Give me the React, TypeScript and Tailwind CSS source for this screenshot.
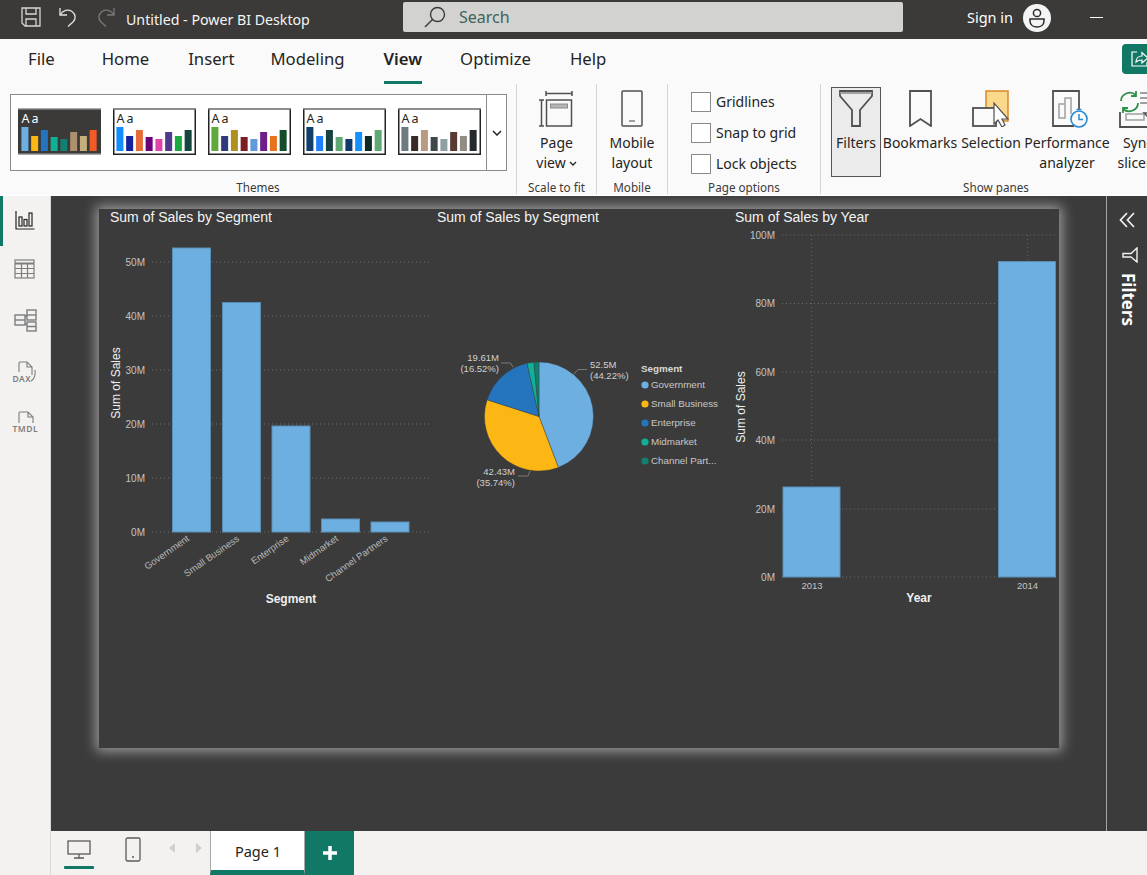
import React from "react";

const GREEN = "#117865";

const themes = [
  { bg: "#3b3a39", text: "#ffffff", frame: "#9a9a9a", bars: ["#6caee0", "#fdb714", "#2475be", "#10b096", "#128070", "#ad916e", "#c4ae7c", "#f25b26"] },
  { bg: "#ffffff", text: "#252423", frame: "#222222", bars: ["#118dff", "#12239e", "#e66c37", "#6b007b", "#e044a7", "#4f3a8c", "#1aab40", "#15463f"] },
  { bg: "#ffffff", text: "#252423", frame: "#222222", bars: ["#5fa83c", "#2d3a7c", "#b0901e", "#7c1d24", "#5f9bd8", "#6b1e8c", "#e8711c", "#144d2b"] },
  { bg: "#ffffff", text: "#252423", frame: "#222222", bars: ["#11406f", "#1c80ff", "#17423f", "#5fa974", "#0f3a6e", "#1391ff", "#0c2a25", "#5fa974"] },
  { bg: "#ffffff", text: "#252423", frame: "#222222", bars: ["#6d7b80", "#3b2a28", "#b89a82", "#40484a", "#8ea0a4", "#5a3a34", "#918c84", "#252a2c"] },
];
const barHeights = [24, 15, 21, 14, 12, 19, 15, 21];

function ThemeThumb({ theme, dark }: { theme: (typeof themes)[number]; dark?: boolean }) {
  return (
    <svg width="83" height="47" viewBox="0 0 83 47" className="shrink-0 [font-family:'Noto_Sans',sans-serif]">
      <rect x="0" y="0" width="83" height="47" fill={theme.bg} />
      {dark ? (
        <>
          <rect x="0" y="0" width="83" height="1.5" fill="#a8a8a8" />
          <rect x="0" y="45.5" width="83" height="1.5" fill="#a8a8a8" />
        </>
      ) : (
        <>
          <rect x="0.75" y="0.75" width="81.5" height="45.5" fill="none" stroke={theme.frame} strokeWidth="1.5" />
          <rect x="0" y="0" width="83" height="1.5" fill="#8c8c8c" />
        </>
      )}
      <text x="3.5" y="15" fontSize="12.5" letterSpacing="2" fill={theme.text}>Aa</text>
      {theme.bars.map((c, i) => (
        <rect key={i} x={3.4 + i * 9.75} y={43 - barHeights[i]} width="7" height={barHeights[i]} fill={c} />
      ))}
    </svg>
  );
}

function BigButton({ icon, lines, width }: { icon: React.ReactNode; lines: React.ReactNode[]; width: string }) {
  return (
    <div className={`flex flex-col items-center shrink-0 ${width}`}>
      <div className="h-[37px] flex items-center justify-center">{icon}</div>
      <div className="mt-[6px] text-center leading-[20px] whitespace-nowrap">
        {lines.map((l, i) => (
          <div key={i}>{l}</div>
        ))}
      </div>
    </div>
  );
}

function Check({ label }: { label: string }) {
  return (
    <div className="flex items-center h-[20px] gap-[5px]">
      <div className="w-[20px] h-[20px] bg-white border border-[#8a8a8a]" />
      <span className="-mt-[2px]">{label}</span>
    </div>
  );
}

function GroupLabel({ children }: { children: React.ReactNode }) {
  return <div className="absolute left-0 right-0 bottom-[-1px] text-center text-[11.7px] leading-[16px] text-[#3b3a39] whitespace-nowrap">{children}</div>;
}

const gridDots = "1 3";

function BarSegmentChart() {
  const ticks = [["50M", 262], ["40M", 316], ["30M", 370], ["20M", 424], ["10M", 478], ["0M", 532]] as const;
  const bars = [
    { x: 172, top: 248, label: "Government" },
    { x: 222, top: 302.5, label: "Small Business" },
    { x: 271.5, top: 426, label: "Enterprise" },
    { x: 321, top: 519, label: "Midmarket" },
    { x: 370.5, top: 522, label: "Channel Partners" },
  ];
  return (
    <svg viewBox="99 228 332 520" className="w-[332px] h-[520px] [font-family:'Liberation_Sans',sans-serif]">
      {ticks.map(([t, y]) => (
        <g key={t}>
          <text x="145" y={y + 3.5} fontSize="10" textAnchor="end" fill="#c4c4c4">{t}</text>
          <line x1="152" x2="431" y1={y} y2={y} stroke="#6e6e6e" strokeDasharray={gridDots} />
        </g>
      ))}
      {bars.map((b) => (
        <g key={b.label}>
          <rect x={b.x + 0.5} y={b.top} width="38" height={532 - b.top} fill="#6eafe1" stroke="#5a8db5" />
          <text transform={`translate(${b.x + 18} 540) rotate(-35)`} fontSize="9.5" textAnchor="end" fill="#b8b8b8">{b.label}</text>
        </g>
      ))}
      <text transform="translate(120 383) rotate(-90)" fontSize="12" textAnchor="middle" fill="#efefef">Sum of Sales</text>
      <text x="291" y="603" fontSize="12" fontWeight="700" textAnchor="middle" fill="#efefef">Segment</text>
    </svg>
  );
}

function slicePath(cx: number, cy: number, r: number, from: number, to: number) {
  const a0 = from * 2 * Math.PI;
  const a1 = to * 2 * Math.PI;
  const large = to - from > 0.5 ? 1 : 0;
  return `M${cx} ${cy}L${cx + r * Math.sin(a0)} ${cy - r * Math.cos(a0)}A${r} ${r} 0 ${large} 1 ${cx + r * Math.sin(a1)} ${cy - r * Math.cos(a1)}Z`;
}

function PieChart() {
  const slices = [
    { v: 0.4422, c: "#6eafe1", name: "Government" },
    { v: 0.3574, c: "#fdb714", name: "Small Business" },
    { v: 0.1652, c: "#2475be", name: "Enterprise" },
    { v: 0.0204, c: "#10b096", name: "Midmarket" },
    { v: 0.0148, c: "#128070", name: "Channel Part..." },
  ];
  let acc = 0;
  return (
    <svg viewBox="431 228 299 520" className="w-[299px] h-[520px] [font-family:'Liberation_Sans',sans-serif]">
      {slices.map((s) => {
        const d = slicePath(539, 416.5, 54.5, acc, acc + s.v);
        acc += s.v;
        return <path key={s.name} d={d} fill={s.c} stroke="#3b3b3b" strokeWidth="0.4" />;
      })}
      <g fill="none" stroke="#8a8a8a" strokeWidth="0.8">
        <path d="M574 374 L578 369.5 H587" />
        <path d="M513 367 L510.5 363 H501" />
        <path d="M530 471 L528 476 H518" />
      </g>
      <g fontSize="9.5" fill="#d0d0d0">
        <text x="590" y="367.5">52.5M</text>
        <text x="590" y="378.5">(44.22%)</text>
        <text x="499" y="360.5" textAnchor="end">19.61M</text>
        <text x="499" y="371.5" textAnchor="end">(16.52%)</text>
        <text x="515" y="474.5" textAnchor="end">42.43M</text>
        <text x="515" y="485.5" textAnchor="end">(35.74%)</text>
      </g>
      <text x="641" y="371.5" fontSize="9.8" fontWeight="700" fill="#d8d8d8">Segment</text>
      {slices.map((s, i) => (
        <g key={s.name}>
          <circle cx="645" cy={385 + i * 19} r="3.6" fill={s.c} />
          <text x="651" y={388 + i * 19} fontSize="9.8" fill="#c8c8c8">{s.name}</text>
        </g>
      ))}
    </svg>
  );
}

function YearChart() {
  const ticks = [["100M", 235], ["80M", 303.5], ["60M", 372], ["40M", 440], ["20M", 509], ["0M", 577]] as const;
  return (
    <svg viewBox="730 228 329 520" className="w-[329px] h-[520px] [font-family:'Liberation_Sans',sans-serif]">
      {ticks.map(([t, y]) => (
        <g key={t}>
          <text x="775" y={y + 3.5} fontSize="10" textAnchor="end" fill="#c4c4c4">{t}</text>
          <line x1="782" x2="1056" y1={y} y2={y} stroke="#6e6e6e" strokeDasharray={gridDots} />
        </g>
      ))}
      <line x1="811.5" x2="811.5" y1="235" y2="487" stroke="#5e5e5e" strokeDasharray={gridDots} />
      <line x1="1027.5" x2="1027.5" y1="235" y2="261" stroke="#5e5e5e" strokeDasharray={gridDots} />
      <rect x="783" y="487" width="57" height="90" fill="#6eafe1" stroke="#5a8db5" />
      <rect x="998.5" y="261.5" width="57" height="315.5" fill="#6eafe1" stroke="#5a8db5" />
      <text x="812" y="589" fontSize="9.5" textAnchor="middle" fill="#c4c4c4">2013</text>
      <text x="1027.5" y="589" fontSize="9.5" textAnchor="middle" fill="#c4c4c4">2014</text>
      <text transform="translate(745 407) rotate(-90)" fontSize="12" textAnchor="middle" fill="#efefef">Sum of Sales</text>
      <text x="919" y="602" fontSize="12" fontWeight="700" textAnchor="middle" fill="#efefef">Year</text>
    </svg>
  );
}

function VisualTitle({ children, pl }: { children: React.ReactNode; pl: string }) {
  return <div className={`h-[19px] leading-[17px] text-[14px] text-[#f4f4f4] whitespace-nowrap [font-family:'Liberation_Sans',sans-serif] ${pl}`}>{children}</div>;
}

export default function App() {
  return (
    <div className="w-[1147px] h-[875px] overflow-hidden flex flex-col bg-[#3b3b3b] text-[#252423] [font-family:'Noto_Sans',sans-serif]">
      {/* title bar */}
      <div className="h-[39px] bg-[#3b3a39] flex items-center shrink-0 text-white">
        <svg width="20" height="20" viewBox="0 0 20 20" fill="none" stroke="#d6d6d6" strokeWidth="1.3" className="ml-[21px] mb-[6px]">
          <path d="M1 1H19V19H4L1 16Z" />
          <path d="M5 1V7H15V1" />
          <path d="M5 19V12H15V19" />
        </svg>
        <svg width="18" height="20" viewBox="0 0 18 20" fill="none" stroke="#e4e4e4" strokeWidth="1.3" className="ml-[18px] mb-[6px]">
          <path d="M1 1V8H8" />
          <path d="M1 8C4 3 9 2 13 4.500C17 7.500 17 12 14 15L9 19.500" />
        </svg>
        <svg width="18" height="20" viewBox="0 0 18 20" fill="none" stroke="#7a7a7a" strokeWidth="1.3" className="ml-[20px] mb-[6px]">
          <path d="M17 1V8H10" />
          <path d="M17 8C14 3 9 2 5 4.500C1 7.500 1 12 4 15L9 19.500" />
        </svg>
        <div className="ml-[11px] w-[277px] text-[14.2px] whitespace-nowrap text-[#f5f5f5]">Untitled - Power BI Desktop</div>
        <div className="w-[500px] h-[30px] mb-[5px] bg-[#d2d2d0] rounded-[2px] flex items-center pl-[21px]">
          <svg width="22" height="22" viewBox="0 0 22 22" fill="none" stroke="#3b3a39" strokeWidth="1.4">
            <circle cx="13.500" cy="8.500" r="7" />
            <path d="M8.500 13.500L1 21" />
          </svg>
          <span className="ml-[13px] text-[16px] text-[#3f635a]">Search</span>
        </div>
        <div className="ml-[64px] text-[14.5px] mb-[4px] whitespace-nowrap">Sign in</div>
        <div className="ml-[10px] mb-[4px] w-[28px] h-[28px] rounded-full bg-[#f4f4f4] flex items-center justify-center">
          <svg width="18" height="20" viewBox="0 0 18 20" fill="none" stroke="#2b2a29" strokeWidth="1.5">
            <circle cx="9" cy="5" r="3.600" />
            <path d="M2 11H16V13C16 17 12.500 19 9 19C5.500 19 2 17 2 13Z" />
          </svg>
        </div>
        <div className="ml-[39px] mb-[4px] w-[13px] h-[1.5px] bg-white" />
      </div>

      {/* ribbon tabs */}
      <div className="h-[45px] bg-[#fafafa] flex items-start shrink-0 text-[16.7px] relative">
        <span className="ml-[28px] mt-[7px] leading-[26px]">File</span>
        <span className="ml-[47px] mt-[7px] leading-[26px]">Home</span>
        <span className="ml-[39px] mt-[7px] leading-[26px]">Insert</span>
        <span className="ml-[36px] mt-[7px] leading-[26px]">Modeling</span>
        <span className="ml-[39px] mt-[7px] leading-[26px] font-semibold border-b-[3px] border-[#117865] h-[38px]">View</span>
        <span className="ml-[38px] mt-[7px] leading-[26px]">Optimize</span>
        <span className="ml-[39px] mt-[7px] leading-[26px]">Help</span>
        <div className="absolute left-[1122px] top-[5px] w-[40px] h-[30px] rounded-[4px] flex items-center pl-[9px]" style={{ backgroundColor: GREEN }}>
          <svg width="18" height="18" viewBox="0 0 18 18" fill="none" stroke="#ffffff" strokeWidth="1.2">
            <path d="M6 2H1V16H16V12" />
            <path d="M5 12C5 8 8 6 11 6V2.500L17 8L11 13V10C8.500 10 6.500 10.500 5 12Z" />
          </svg>
        </div>
      </div>

      {/* ribbon */}
      <div className="h-[112px] bg-[#fafafa] flex shrink-0 text-[14px] text-[#252423] border-b border-white">
        <div className="relative w-[517px] h-[110px] shrink-0 border-r border-[#d4d4d4] pt-[10px] pl-[10px]">
          <div className="w-[497px] h-[77px] bg-white border border-[#8a8a8a] flex">
            <div className="w-[475px] flex items-start gap-[12px] pl-[6.5px] pt-[13px]">
              {themes.map((t, i) => (
                <ThemeThumb key={i} theme={t} dark={i === 0} />
              ))}
            </div>
            <div className="flex-1 border-l border-[#8a8a8a] flex items-center justify-center">
              <svg width="10" height="6" viewBox="0 0 10 6" fill="none" stroke="#252423" strokeWidth="1.5"><path d="M1 1L5 5L9 1" /></svg>
            </div>
          </div>
          <GroupLabel>Themes</GroupLabel>
        </div>

        <div className="relative w-[80px] h-[110px] shrink-0 border-r border-[#d4d4d4] pt-[6px]">
          <BigButton
            width="w-full"
            icon={
              <svg width="37" height="37" viewBox="0 0 37 37" fill="none" stroke="#505050" strokeWidth="1.500">
                <path d="M8 1V6M34 1V6M8 3.500H34" />
                <path d="M1 10H6M1 36H6M3.500 10V36" />
                <rect x="8.500" y="10" width="25" height="26" />
                <rect x="12.500" y="14" width="17" height="4" fill="#b5b5b5" stroke="#8a8a8a" strokeWidth="1" />
              </svg>
            }
            lines={[
              "Page",
              <span className="inline-flex items-center gap-[3px]">view<svg width="8" height="5" viewBox="0 0 8 5" fill="none" stroke="#252423" strokeWidth="1.300"><path d="M1 1L4 4L7 1" /></svg></span>,
            ]}
          />
          <GroupLabel>Scale to fit</GroupLabel>
        </div>

        <div className="relative w-[71px] h-[110px] shrink-0 border-r border-[#d4d4d4] pt-[6px]">
          <BigButton
            width="w-full"
            icon={
              <svg width="22" height="37" viewBox="0 0 22 37" fill="none" stroke="#505050" strokeWidth="1.500">
                <rect x="1" y="1" width="20" height="35" rx="1" />
                <path d="M8 31H14" stroke="#8a8a8a" strokeWidth="1.600" />
              </svg>
            }
            lines={["Mobile", "layout"]}
          />
          <GroupLabel>Mobile</GroupLabel>
        </div>

        <div className="relative w-[153px] h-[110px] shrink-0 border-r border-[#d4d4d4] pl-[23px] pt-[8px] flex flex-col gap-[11px]">
          <Check label="Gridlines" />
          <Check label="Snap to grid" />
          <Check label="Lock objects" />
          <GroupLabel>Page options</GroupLabel>
        </div>

        <div className="relative flex-1 h-[110px] pl-[10px]">
          <div className="flex">
            <div className="mt-[3px] h-[90px] w-[50px] shrink-0 bg-[#ebebeb] border border-[#555555] pt-[2px]">
              <BigButton
                width="w-full"
                icon={
                  <svg width="36" height="37" viewBox="0 0 36 37" fill="none" stroke="#505050" strokeWidth="1.800">
                    <path d="M2 1H34V6L22 20V36H14V20L2 6Z" />
                    <path d="M2 3H34" stroke="#9a9a9a" />
                  </svg>
                }
                lines={["Filters"]}
              />
            </div>
            <div className="pt-[6px] flex">
              <BigButton
                width="w-[78px]"
                icon={
                  <svg width="23" height="37" viewBox="0 0 23 37" fill="none" stroke="#505050" strokeWidth="1.800">
                    <path d="M1 1H22V36L11.500 29L1 36Z" />
                  </svg>
                }
                lines={["Bookmarks"]}
              />
              <BigButton
                width="w-[64px]"
                icon={
                  <svg width="38" height="37" viewBox="0 0 38 37" fill="none">
                    <rect x="14" y="1" width="22" height="30" fill="#fad98c" stroke="#d98a28" strokeWidth="1.500" />
                    <rect x="1" y="18" width="23" height="18" fill="#fafafa" stroke="#505050" strokeWidth="1.800" />
                    <path d="M22 13V34L26 30L30 37L33 35L30 29H36Z" fill="#ffffff" stroke="#505050" strokeWidth="1.200" />
                  </svg>
                }
                lines={["Selection"]}
              />
              <BigButton
                width="w-[88px]"
                icon={
                  <svg width="36" height="38" viewBox="0 0 36 38" fill="none" className="ml-[6px]">
                    <path d="M22 36H1V1H27V20" stroke="#505050" strokeWidth="1.800" />
                    <path d="M7 28V14H13V28ZM13 24V8H19V24" stroke="#a0a0a0" strokeWidth="1.500" />
                    <circle cx="27" cy="29" r="8" fill="#fafafa" stroke="#2a8ad0" strokeWidth="1.600" />
                    <path d="M27 24V29.500H31M24.500 19.500H29.500" stroke="#2a8ad0" strokeWidth="1.500" />
                  </svg>
                }
                lines={["Performance", "analyzer"]}
              />
              <BigButton
                width="w-[54px]"
                icon={
                  <svg width="42" height="38" viewBox="0 0 42 38" fill="none" className="ml-[2px]">
                    <path d="M3 11C3 4 12 0 18 5M18 1V6H13" stroke="#2f9048" strokeWidth="1.800" />
                    <path d="M20 13C20 20 11 24 5 19M5 23V18H10" stroke="#2f9048" strokeWidth="1.800" />
                    <path d="M22 3H42M22 8H42M22 13H42" stroke="#a0a0a0" strokeWidth="1.800" />
                    <path d="M2 22V37H38" stroke="#505050" strokeWidth="1.800" />
                    <path d="M8 24H26V30H8Z" stroke="#a0a0a0" strokeWidth="1.500" />
                    <path d="M26 23H42L37 29V37H32V29Z" fill="#fafafa" stroke="#505050" strokeWidth="1.500" />
                  </svg>
                }
                lines={["Sync", "slicers"]}
              />
            </div>
          </div>
          <div className="absolute left-0 w-[350px] bottom-[-1px] text-center text-[11.7px] leading-[16px] text-[#3b3a39]">Show panes</div>
        </div>
      </div>

      {/* body */}
      <div className="flex-1 flex min-h-0">
        <div className="w-[51px] shrink-0 bg-[#f3f2f1] border-r border-[#d8d8d8] relative">
          <div className="absolute left-0 top-0 w-[3px] h-[50px]" style={{ backgroundColor: GREEN }} />
          <div className="flex flex-col items-center pt-[14px] gap-[29px] pr-[1px]">
            <svg width="20" height="20" viewBox="0 0 20 20" fill="none" stroke="#252423" strokeWidth="1.200">
              <path d="M1 1V19H19.500" />
              <rect x="4" y="7" width="3" height="9" />
              <rect x="9" y="9.500" width="3" height="6.500" />
              <rect x="14" y="3" width="3" height="13" />
            </svg>
            <svg width="21" height="21" viewBox="0 0 21 21" fill="none" stroke="#7d7d7d" strokeWidth="1.200">
              <rect x="1" y="1" width="19" height="18" />
              <path d="M1 4.500H20" strokeWidth="2" />
              <path d="M1 9.500H20M1 14.500H20M7.500 4V19M13.500 4V19" />
            </svg>
            <svg width="23" height="23" viewBox="0 0 23 23" fill="none" stroke="#7d7d7d" strokeWidth="1.400" className="ml-[2px]">
              <rect x="1" y="6" width="10" height="10" />
              <path d="M1 11H11" />
              <rect x="13" y="1" width="9" height="10" />
              <path d="M13 6H22" />
              <rect x="13" y="13" width="9" height="9" />
              <path d="M13 17.500H22M11 7H13M11 15H13" />
            </svg>
            <div className="relative w-[24px] h-[22px]">
              <svg width="24" height="22" viewBox="0 0 24 22" fill="none" stroke="#7d7d7d" strokeWidth="1.100" className="absolute inset-0">
                <path d="M6 11V2C6 1 7 1 7 1H14L19 6V14M14 1V6H19" />
                <path d="M22 9C22.500 14 21.500 18 18 20" />
              </svg>
              <span className="absolute left-0 bottom-0 text-[8.5px] leading-[9px] font-semibold tracking-[0.5px] text-[#7d7d7d]">DAX</span>
            </div>
            <div className="relative w-[26px] h-[22px] -mt-[1px] ml-[2px]">
              <svg width="26" height="22" viewBox="0 0 26 22" fill="none" stroke="#7d7d7d" strokeWidth="1.100" className="absolute inset-0">
                <path d="M6 12V2C6 1 7 1 7 1H15L20 6V12M15 1V6H20" />
              </svg>
              <span className="absolute left-0 bottom-0 text-[8.5px] leading-[9px] font-semibold tracking-[0.5px] text-[#7d7d7d]">TMDL</span>
            </div>
          </div>
        </div>

        <div className="flex-1 min-w-0 pl-[48px] pt-[13px] bg-[#3b3b3b]">
          <div className="w-[960px] h-[539px] bg-[#3b3b3b] flex shadow-[0_0_12px_3px_rgba(255,255,255,0.5)]">
            <div className="w-[332px]">
              <VisualTitle pl="pl-[11px]">Sum of Sales by Segment</VisualTitle>
              <BarSegmentChart />
            </div>
            <div className="w-[299px]">
              <VisualTitle pl="pl-[6px]">Sum of Sales by Segment</VisualTitle>
              <PieChart />
            </div>
            <div className="w-[329px]">
              <VisualTitle pl="pl-[5px]">Sum of Sales by Year</VisualTitle>
              <YearChart />
            </div>
          </div>
        </div>

        <div className="w-[41px] shrink-0 border-l border-[#a5a5a5] bg-[#3b3b3b] flex flex-col items-center pt-[16px] text-white">
          <svg width="16" height="16" viewBox="0 0 16 16" fill="none" stroke="#f0f0f0" strokeWidth="1.700">
            <path d="M8 1L1.500 8L8 15M15 1L8.500 8L15 15" />
          </svg>
          <svg width="16" height="16" viewBox="0 0 16 16" fill="none" stroke="#f0f0f0" strokeWidth="1.400" className="mt-[19px] ml-[5px]">
            <path d="M15 1V15L9 10H1V6.500H9Z" />
          </svg>
          <div className="mt-[10px] ml-[1px] text-[17px] font-bold leading-[20px] [writing-mode:vertical-rl]">Filters</div>
        </div>
      </div>

      {/* page tabs */}
      <div className="h-[44px] shrink-0 bg-[#f3f2f1] flex">
        <div className="w-[51px] shrink-0 border-r border-[#d8d8d8]" />
        <div className="w-[159px] shrink-0 relative flex items-start">
          <div className="ml-[13px] w-[30px] flex flex-col items-center pt-[9px]">
            <svg width="24" height="19" viewBox="0 0 24 19" fill="none" stroke="#5a5a5a" strokeWidth="1.300">
              <rect x="1" y="1" width="22" height="13" />
              <path d="M12 14V18M7 18H17" />
            </svg>
            <div className="mt-[7px] w-[30px] h-[3px] rounded-[1px]" style={{ backgroundColor: GREEN }} />
          </div>
          <svg width="16" height="25" viewBox="0 0 16 25" fill="none" stroke="#5a5a5a" strokeWidth="1.300" className="ml-[31px] mt-[6px]">
            <rect x="1" y="1" width="14" height="23" rx="1.500" />
            <path d="M7 20H9" />
          </svg>
          <svg width="7" height="10" viewBox="0 0 7 10" className="ml-[27px] mt-[12px]"><path d="M7 0V10L1 5Z" fill="#cfcfcf" /></svg>
          <svg width="7" height="10" viewBox="0 0 7 10" className="ml-[21px] mt-[12px]"><path d="M0 0V10L6 5Z" fill="#cfcfcf" /></svg>
        </div>
        <div className="w-[95px] shrink-0 bg-white border-x border-[#a8a8a8] border-b-[5px] border-b-[#117865] flex items-center justify-center text-[14.5px] pt-[3px] pl-[1px]">Page 1</div>
        <div className="w-[49px] shrink-0 flex items-center justify-center" style={{ backgroundColor: GREEN }}>
          <svg width="14" height="14" viewBox="0 0 14 14"><path d="M7 0V14M0 7H14" stroke="#ffffff" strokeWidth="3.500" /></svg>
        </div>
      </div>
    </div>
  );
}
